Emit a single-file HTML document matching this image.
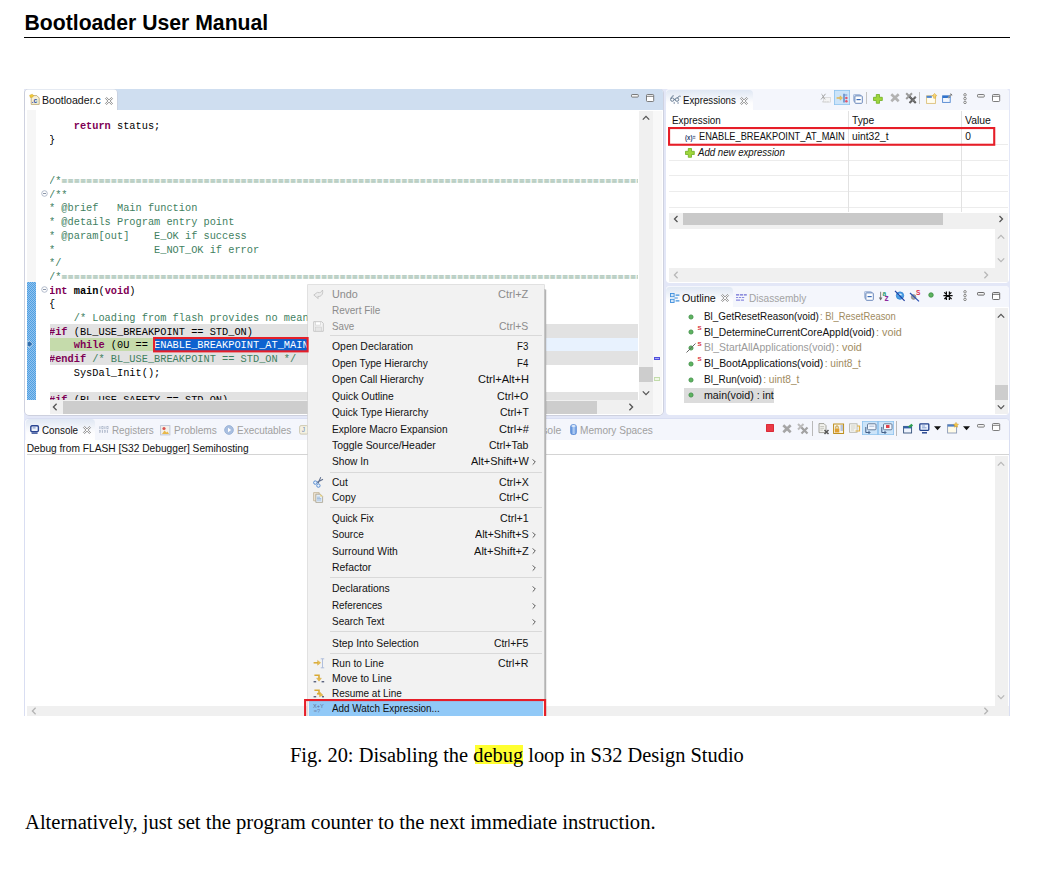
<!DOCTYPE html>
<html lang="en"><head><meta charset="utf-8"><title>Bootloader User Manual</title>
<style>
html,body{margin:0;padding:0;background:#fff}
body{width:1057px;height:876px;position:relative;overflow:hidden;font-family:"Liberation Sans", sans-serif}
.r{position:absolute}
.i{position:absolute;overflow:visible}
.t{position:absolute;white-space:pre;transform-origin:0 0}
.k{color:#7f0055;font-weight:bold}
.c{color:#3f7f5f}
.e{color:#86ad98;text-shadow:0 1px 0 #92b7a3;position:relative;top:0px;display:inline-block;transform:scaleY(0.8);transform-origin:0 6px}
.code{position:absolute;white-space:pre;font-family:"Liberation Mono", monospace;transform-origin:0 0;color:#000}
</style></head><body>
<span class="t" style='left:24.50px;top:9.17px;font-size:21.2px;line-height:27.56px;color:#000;font-weight:bold;'>Bootloader User Manual</span>
<div class="r" style="left:24px;top:36.8px;width:985.5px;height:1.3px;background:#000;"></div>
<div class="r" style="left:24px;top:89.3px;width:986px;height:626.7px;background:#e3e7f7;"></div>
<div class="r" style="left:25px;top:89.4px;width:638.4px;height:325.9px;background:#fff;border-radius:4px;box-shadow:0 0 0 0.7px #c6c9d6;clip-path:inset(0 -2px -2px -2px)"></div>
<div class="r" style="left:25px;top:89.4px;width:638.4px;height:20.3px;background:#cfdef0;border-radius:4px 4px 0 0"></div>
<div class="r" style="left:25px;top:89.4px;width:92.3px;height:21.1px;background:#fff;border-radius:4px 4px 0 0;box-shadow:0 0 0 0.6px #c8ccd8;clip-path:inset(0 -2px -2px -2px)"></div>
<div class="r" style="left:25.2px;top:109.8px;width:92.6px;height:1.4px;background:#fff;"></div>
<span class="t" style='left:41.70px;top:94.04px;font-size:10.2px;line-height:13.26px;color:#111;transform:scaleX(1.0381);'>Bootloader.c</span>
<div class="r" style="left:27.3px;top:110px;width:8.4px;height:290px;background:#f6f6f6;"></div>
<div class="r" style="left:27px;top:282px;width:8.9px;height:118px;background:#6cade6;background-image:repeating-conic-gradient(#4f9fe2 0 25%,#92c3ee 0 50%);background-size:2px 2px"></div>
<div class="r" style="left:49.5px;top:323.95px;width:588.8px;height:13.71px;background:#e2e2e2;"></div>
<div class="r" style="left:49.5px;top:351.37px;width:588.8px;height:13.71px;background:#e2e2e2;"></div>
<div class="r" style="left:49.5px;top:392.00000000000006px;width:588.8px;height:7.999999999999943px;background:#e2e2e2;"></div>
<div class="r" style="left:49.5px;top:337.66px;width:588.8px;height:13.71px;background:#e8f2fe;"></div>
<div class="r" style="left:49.5px;top:337.66px;width:104px;height:13.71px;background:#c5dbab;"></div>
<div class="r" style="left:153.5px;top:338.26000000000005px;width:154px;height:12.510000000000002px;background:#0d62cf;"></div>
<div class="r" style="left:49.5px;top:110px;width:588.8px;height:290px;overflow:hidden"><div class="code" style="left:-0.8px;top:10.20px;font-size:11.0px;line-height:13.71px;transform:scaleX(0.9362)">    <span class="k">return</span> status;
}


<span class="c">/*</span><span class="e">==============================================================================================================</span>
<span class="c">/**</span>
<span class="c">* @brief   Main function</span>
<span class="c">* @details Program entry point</span>
<span class="c">* @param[out]    E_OK if success</span>
<span class="c">*                E_NOT_OK if error</span>
<span class="c">*/</span>
<span class="c">/*</span><span class="e">==============================================================================================================</span>
<span class="k">int</span> <b>main</b>(<span class="k">void</span>)
{
    <span class="c">/* Loading from flash provides no meaningful</span>
<span class="k">#if</span> (BL_USE_BREAKPOINT == STD_ON)
    <span class="k">while</span> (0U == <span style="color:#fff">ENABLE_BREAKPOINT_AT_MAIN)</span>
<span class="k">#endif</span> <span class="c">/* BL_USE_BREAKPOINT == STD_ON */</span>
    SysDal_Init();

<span class="k">#if</span> (BL_USE_SAFETY == STD_ON)</div></div>
<svg class="i" style="left:40.7px;top:189.7px" width="7" height="7" viewBox="0 0 7 7"><circle cx="3.5" cy="3.5" r="2.8" fill="#fff" stroke="#aab4c6" stroke-width="0.9"/><path d="M2 3.5h3" stroke="#8a95a8" stroke-width="1"/></svg>
<svg class="i" style="left:40.7px;top:285.5px" width="7" height="7" viewBox="0 0 7 7"><circle cx="3.5" cy="3.5" r="2.8" fill="#fff" stroke="#aab4c6" stroke-width="0.9"/><path d="M2 3.5h3" stroke="#8a95a8" stroke-width="1"/></svg>
<svg class="i" style="left:27px;top:340px" width="6.5" height="8" viewBox="0 0 6.5 8"><path d="M0.2 1.6h1.8V0.4L5.8 4 2 7.6V6.4H0.2z" fill="#2f6eae" stroke="#d4e6f6" stroke-width="0.7" stroke-linejoin="round"/></svg>
<div class="r" style="left:639px;top:111px;width:14px;height:289.4px;background:#f0f0f0;"></div>
<div class="r" style="left:639px;top:367px;width:14px;height:15px;background:#cdcdcd;"></div>
<div class="r" style="left:653px;top:111px;width:9px;height:302.7px;background:#f8f8f8;"></div>
<div class="r" style="left:654.2px;top:356.6px;width:6px;height:3.2px;background:#a9a9f6;box-shadow:inset 0 0 0 0.9px #4f4fdc"></div>
<div class="r" style="left:654.2px;top:377.4px;width:6px;height:3.2px;background:#f1f8e6;box-shadow:inset 0 0 0 0.9px #c2dcaa"></div>
<svg class="i" style="left:640.6px;top:113.3px" width="10" height="10" viewBox="-5 -5 10 10"><path d="M-3.2 1.6L0 -1.6L3.2 1.6" fill="none" stroke="#555" stroke-width="1.3"/></svg>
<svg class="i" style="left:640.6px;top:387.5px" width="10" height="10" viewBox="-5 -5 10 10"><path d="M-3.2 -1.6L0 1.6L3.2 -1.6" fill="none" stroke="#555" stroke-width="1.3"/></svg>
<div class="r" style="left:49.5px;top:400.4px;width:603.5px;height:13.3px;background:#f0f0f0;"></div>
<div class="r" style="left:62.5px;top:400.8px;width:534.5px;height:12.8px;background:#cdcdcd;"></div>
<svg class="i" style="left:49.5px;top:401.5px" width="10" height="10" viewBox="-5 -5 10 10"><path d="M1.6 -3.2L-1.6 0L1.6 3.2" fill="none" stroke="#555" stroke-width="1.3"/></svg>
<svg class="i" style="left:626px;top:401.5px" width="10" height="10" viewBox="-5 -5 10 10"><path d="M-1.6 -3.2L1.6 0L-1.6 3.2" fill="none" stroke="#555" stroke-width="1.3"/></svg>
<svg class="i" style="left:630.6px;top:94.0px" width="8" height="4" viewBox="0 0 8 4"><rect x="0.5" y="0.5" width="6.8" height="2.6" rx="0.7" fill="#f4f4f4" stroke="#6e6e6e" stroke-width="0.9"/></svg>
<svg class="i" style="left:646.0px;top:93.9px" width="9" height="9" viewBox="0 0 9 9"><rect x="0.5" y="0.5" width="7.2" height="7" rx="0.9" fill="#fff" stroke="#6e6e6e" stroke-width="0.9"/><path d="M0.5 2.3h7.2" stroke="#6e6e6e" stroke-width="0.9"/></svg>
<svg class="i" style="left:105px;top:96.5px" width="8" height="8" viewBox="0 0 8 8"><path d="M1.6 0.5L4 2.9L6.4 0.5L7.5 1.6L5.1 4L7.5 6.4L6.4 7.5L4 5.1L1.6 7.5L0.5 6.4L2.9 4L0.5 1.6Z" fill="#fbfbfb" stroke="#7e7e7e" stroke-width="0.85" stroke-linejoin="round"/></svg>
<svg class="i" style="left:28.6px;top:94.2px" width="11" height="11" viewBox="0 0 11 11"><path d="M2.2 1.6h5.6l2.4 2.4v6.4h-8z" fill="#f7f0d8" stroke="#b7a26a" stroke-width="0.8"/><path d="M0.6 1.2l2.6-1 1.6 1.4-1.2 1.6-2.4 0.2z" fill="#f0c93a" stroke="#c99a1a" stroke-width="0.4"/><text x="2.6" y="9.4" font-size="6.8" font-weight="bold" fill="#2f55a8" font-family="Liberation Sans,sans-serif">.c</text></svg>
<div class="r" style="left:666.2px;top:89.3px;width:342.6px;height:194.2px;background:#fff;border-radius:4px"></div>
<div class="r" style="left:666.2px;top:89.3px;width:342.6px;height:20.5px;background:#f4f6fc;border-radius:4px 4px 0 0"></div>
<div class="r" style="left:666.4px;top:89.6px;width:86.8px;height:20.4px;background:linear-gradient(#dfe7f3,#fdfdfe 65%,#fff);border-radius:4px 4px 0 0"></div>
<span class="t" style='left:682.70px;top:93.54px;font-size:10.2px;line-height:13.26px;color:#111;transform:scaleX(0.9514);'>Expressions</span>
<svg class="i" style="left:740px;top:96.5px" width="8" height="8" viewBox="0 0 8 8"><path d="M1.6 0.5L4 2.9L6.4 0.5L7.5 1.6L5.1 4L7.5 6.4L6.4 7.5L4 5.1L1.6 7.5L0.5 6.4L2.9 4L0.5 1.6Z" fill="#fbfbfb" stroke="#7e7e7e" stroke-width="0.85" stroke-linejoin="round"/></svg>
<svg class="i" style="left:670px;top:95px" width="11.5" height="9.5" viewBox="0 0 11.5 9.5"><circle cx="2.3" cy="4.6" r="1.7" fill="none" stroke="#5a7088" stroke-width="0.9"/><circle cx="7" cy="4.6" r="1.7" fill="none" stroke="#5a7088" stroke-width="0.9"/><path d="M0.8 3.8C1.4 1.6 2.6 0.6 3.8 0.8M4 4.4h1.3M7.6 3C8.2 1.4 9.6 0.6 10.8 1.4" fill="none" stroke="#5a7088" stroke-width="0.9"/><path d="M3.6 7.4h1.3v1.2h-1.3zM7.4 7.4h1.3v1.2h-1.3z" fill="#4a6284"/></svg>
<span class="t" style='left:672.20px;top:113.64px;font-size:10.2px;line-height:13.26px;color:#111;transform:scaleX(0.9681);'>Expression</span>
<span class="t" style='left:851.70px;top:113.64px;font-size:10.2px;line-height:13.26px;color:#111;transform:scaleX(1.0093);'>Type</span>
<span class="t" style='left:965.20px;top:113.54px;font-size:10.2px;line-height:13.26px;color:#111;transform:scaleX(1.0232);'>Value</span>
<span class="t" style='left:698.70px;top:130.24px;font-size:10.2px;line-height:13.26px;color:#111;transform:scaleX(0.9078);'>ENABLE_BREAKPOINT_AT_MAIN</span>
<span class="t" style='left:852.00px;top:130.34px;font-size:10.2px;line-height:13.26px;color:#111;transform:scaleX(1.0092);'>uint32_t</span>
<span class="t" style='left:965.20px;top:130.34px;font-size:10.2px;line-height:13.26px;color:#111;'>0</span>
<span class="t" style='left:698.20px;top:145.74px;font-size:10.2px;line-height:13.26px;color:#111;font-style:italic;transform:scaleX(0.9460);'>Add new expression</span>
<svg class="i" style="left:684.8px;top:132.6px" width="11" height="8" viewBox="0 0 11 8"><text x="0" y="6.6" font-size="7.4" font-weight="bold" fill="#2c3c6c" font-family="Liberation Sans,sans-serif" textLength="7.4" lengthAdjust="spacingAndGlyphs">(x)</text><path d="M7.8 3.4h2.6M7.8 5.2h2.6" stroke="#44547c" stroke-width="0.8"/></svg>
<svg class="i" style="left:684.6px;top:147.8px" width="10" height="10" viewBox="0 0 10 10"><path d="M3.3 0.5h3.2v2.8h2.8v3.2h-2.8v2.8h-3.2v-2.8h-2.8v-3.2h2.8z" fill="#9fd63c" stroke="#6fae22" stroke-width="0.8" stroke-linejoin="round"/></svg>
<div class="r" style="left:669px;top:144.2px;width:339px;height:1px;background:#ececec;"></div>
<div class="r" style="left:669px;top:159.5px;width:339px;height:1px;background:#ececec;"></div>
<div class="r" style="left:669px;top:175.3px;width:339px;height:1px;background:#ececec;"></div>
<div class="r" style="left:669px;top:191.2px;width:339px;height:1px;background:#ececec;"></div>
<div class="r" style="left:669px;top:207px;width:339px;height:1px;background:#ececec;"></div>
<div class="r" style="left:847.5px;top:110.5px;width:1px;height:101px;background:#e2e2e2;"></div>
<div class="r" style="left:961px;top:110.5px;width:1px;height:101px;background:#e2e2e2;"></div>
<div class="r" style="left:669px;top:212.5px;width:339px;height:16.5px;background:#f0f0f0;"></div>
<div class="r" style="left:683px;top:212.5px;width:260px;height:12.5px;background:#c9c9c9;"></div>
<svg class="i" style="left:670.5px;top:214px" width="10" height="10" viewBox="-5 -5 10 10"><path d="M1.5 -3L-1.5 0L1.5 3" fill="none" stroke="#555" stroke-width="1.3"/></svg>
<svg class="i" style="left:995.5px;top:214px" width="10" height="10" viewBox="-5 -5 10 10"><path d="M-1.5 -3L1.5 0L-1.5 3" fill="none" stroke="#555" stroke-width="1.3"/></svg>
<div class="r" style="left:994.5px;top:229px;width:13.5px;height:39px;background:#f0f0f0;"></div>
<svg class="i" style="left:996px;top:232px" width="10" height="10" viewBox="-5 -5 10 10"><path d="M-3.2 1.6L0 -1.6L3.2 1.6" fill="none" stroke="#b8b8b8" stroke-width="1.3"/></svg>
<svg class="i" style="left:996px;top:255px" width="10" height="10" viewBox="-5 -5 10 10"><path d="M-3.2 -1.6L0 1.6L3.2 -1.6" fill="none" stroke="#b8b8b8" stroke-width="1.3"/></svg>
<div class="r" style="left:669px;top:268px;width:339px;height:14.2px;background:#f0f0f0;"></div>
<svg class="i" style="left:670.5px;top:269.5px" width="10" height="10" viewBox="-5 -5 10 10"><path d="M1.6 -3.2L-1.6 0L1.6 3.2" fill="none" stroke="#b8b8b8" stroke-width="1.3"/></svg>
<svg class="i" style="left:981px;top:269.5px" width="10" height="10" viewBox="-5 -5 10 10"><path d="M-1.6 -3.2L1.6 0L-1.6 3.2" fill="none" stroke="#b8b8b8" stroke-width="1.3"/></svg>
<div class="r" style="left:833.9px;top:90.2px;width:15.9px;height:14.6px;background:#cce4f9;box-shadow:inset 0 0 0 0.8px #8fc3ee"></div>
<svg class="i" style="left:820px;top:93px" width="11" height="10" viewBox="0 0 11 10"><rect x="3.5" y="4.5" width="7" height="4.6" fill="#f4f4f4" stroke="#d2d2d2" stroke-width="0.7"/><path d="M1 6.5L5.5 0.8M1.5 1.2c1.5 0 2 5 3.8 5" stroke="#a6a6a6" stroke-width="1" fill="none"/><path d="M2 8.8h7" stroke="#c4c4c4" stroke-width="0.7" stroke-dasharray="1 0.6"/></svg>
<svg class="i" style="left:835.5px;top:93px" width="13" height="11" viewBox="0 0 13 11"><path d="M0.6 5h4.2" stroke="#e3b64e" stroke-width="1.5"/><path d="M4 2.8l2.6 2.2L4 7.2z" fill="#e9c568" stroke="#d7a636" stroke-width="0.4"/><path d="M8 0.8v8.8" stroke="#3566b4" stroke-width="1.1"/><path d="M8.5 2h2.8" stroke="#5b86c8" stroke-width="0.9"/><circle cx="10.4" cy="4.9" r="1.25" fill="#e2566a"/><circle cx="10.4" cy="8.3" r="1.25" fill="#e2566a"/></svg>
<svg class="i" style="left:852.6px;top:93.6px" width="10" height="10" viewBox="0 0 10 10"><rect x="0.5" y="0.5" width="7" height="7" rx="0.8" fill="#c9d8ee" stroke="#9fb4d6" stroke-width="0.8"/><rect x="1.9" y="1.9" width="7.4" height="7.4" rx="0.8" fill="#fff" stroke="#5a7ab2" stroke-width="0.9"/><path d="M3.5 5.6h4.2" stroke="#3a6ab8" stroke-width="1.2"/></svg>
<div class="r" style="left:866.3px;top:92px;width:1.2px;height:11.8px;background:#c2c2c2;"></div>
<svg class="i" style="left:872.8px;top:93.6px" width="10" height="10" viewBox="0 0 10 10"><path d="M3.3 0.5h3.2v2.8h2.8v3.2h-2.8v2.8h-3.2v-2.8h-2.8v-3.2h2.8z" fill="#9fd63c" stroke="#6fae22" stroke-width="0.8" stroke-linejoin="round"/></svg>
<svg class="i" style="left:889.5px;top:93.3px" width="10" height="9.5" viewBox="0 0 10 9.5"><path d="M1.3 1.2L8.7 8.3M8.7 1.2L1.3 8.3" stroke="#b2b2b2" stroke-width="2.6"/></svg>
<svg class="i" style="left:904.5px;top:92px" width="12" height="12" viewBox="0 0 12 12"><path d="M1.2 1.2L7 7M7 1.2L1.2 7" stroke="#9a9a9a" stroke-width="2"/><path d="M4.5 4.8L10.8 11M10.8 4.8L4.5 11" stroke="#5a5a5a" stroke-width="2.1"/><path d="M5 5.2L10.4 10.6M10.4 5.2L5 10.6" stroke="#c8c8c8" stroke-width="0.5" stroke-dasharray="1 1"/></svg>
<div class="r" style="left:919.2px;top:92px;width:1.2px;height:11.8px;background:#c2c2c2;"></div>
<svg class="i" style="left:925.5px;top:92.5px" width="12" height="11" viewBox="0 0 12 11"><rect x="0.6" y="2.8" width="8.8" height="7.6" fill="#fffdf0" stroke="#dcc078" stroke-width="0.9"/><rect x="0.6" y="2.8" width="5.2" height="2.1" fill="#4f86d0"/><path d="M8.6 0.4l2.3 2.4h-1.3v2.4h-2v-2.4h-1.3z" fill="#f6d778" stroke="#d2a030" stroke-width="0.5"/></svg>
<svg class="i" style="left:942px;top:93px" width="11" height="10" viewBox="0 0 11 10"><rect x="0.6" y="2.8" width="7.6" height="6.6" fill="#f2f7fe" stroke="#4f86d0" stroke-width="0.9"/><rect x="0.6" y="2.8" width="7.6" height="2.2" fill="#2f72cc"/><path d="M5.4 4.4l3.4-3.6 1.3 1.2-3.4 3.6z" fill="#9a9a9a"/><path d="M8.6 0.6l1.6 1.5" stroke="#6a6a6a" stroke-width="0.9"/></svg>
<svg class="i" style="left:962.8px;top:92.6px" width="4" height="12" viewBox="0 0 4 12"><circle cx="2" cy="1.8" r="1.25" fill="#fff" stroke="#666" stroke-width="0.75"/><circle cx="2" cy="5.6" r="1.25" fill="#fff" stroke="#666" stroke-width="0.75"/><circle cx="2" cy="9.4" r="1.25" fill="#fff" stroke="#666" stroke-width="0.75"/></svg>
<svg class="i" style="left:976.6px;top:94.1px" width="8" height="4" viewBox="0 0 8 4"><rect x="0.5" y="0.5" width="6.8" height="2.6" rx="0.7" fill="#f4f4f4" stroke="#6e6e6e" stroke-width="0.9"/></svg>
<svg class="i" style="left:992.0px;top:94.0px" width="9" height="9" viewBox="0 0 9 9"><rect x="0.5" y="0.5" width="7.2" height="7" rx="0.9" fill="#fff" stroke="#6e6e6e" stroke-width="0.9"/><path d="M0.5 2.3h7.2" stroke="#6e6e6e" stroke-width="0.9"/></svg>
<div class="r" style="left:666.2px;top:286.2px;width:342.6px;height:129.3px;background:#fff;border-radius:4px"></div>
<div class="r" style="left:666.2px;top:286.2px;width:342.6px;height:21.3px;background:#f4f6fc;border-radius:4px 4px 0 0"></div>
<div class="r" style="left:666.4px;top:286.6px;width:67px;height:21.4px;background:linear-gradient(#dfe7f3,#fdfdfe 65%,#fff);border-radius:4px 4px 0 0"></div>
<span class="t" style='left:682.20px;top:291.84px;font-size:10.2px;line-height:13.26px;color:#111;transform:scaleX(1.0470);'>Outline</span>
<svg class="i" style="left:720.5px;top:293.5px" width="8" height="8" viewBox="0 0 8 8"><path d="M1.6 0.5L4 2.9L6.4 0.5L7.5 1.6L5.1 4L7.5 6.4L6.4 7.5L4 5.1L1.6 7.5L0.5 6.4L2.9 4L0.5 1.6Z" fill="#fbfbfb" stroke="#7e7e7e" stroke-width="0.85" stroke-linejoin="round"/></svg>
<svg class="i" style="left:670px;top:292.8px" width="10" height="10.5" viewBox="0 0 10 10.5"><rect x="0.5" y="0.5" width="3.6" height="3.2" fill="#d3e6f9" stroke="#3f8fdc" stroke-width="0.9"/><rect x="0.5" y="6.3" width="3.6" height="3.2" fill="#d3e6f9" stroke="#3f8fdc" stroke-width="0.9"/><path d="M5.6 2.1h3.8M4.4 5h3.4M5.6 7.9h3.8" stroke="#3f8fdc" stroke-width="1.1"/></svg>
<svg class="i" style="left:736.3px;top:294px" width="11" height="7.5" viewBox="0 0 11 7.5"><path d="M0 0.9h10.8" stroke="#6e6ed2" stroke-width="1.1" stroke-dasharray="3.2 0.8"/><path d="M0 3.5h9" stroke="#8a8ae0" stroke-width="1.1" stroke-dasharray="2.2 0.8"/><path d="M0 6.1h8" stroke="#8a8ae0" stroke-width="1.1" stroke-dasharray="4 0.8"/></svg>
<span class="t" style='left:749.20px;top:291.84px;font-size:10.2px;line-height:13.26px;color:#a3a3a3;transform:scaleX(0.9922);'>Disassembly</span>
<div class="r" style="left:684px;top:387.5px;width:90px;height:15.5px;background:#dcdcdc;"></div>
<svg class="i" style="left:687px;top:312.5px" width="8" height="8" viewBox="0 0 8 8"><circle cx="4" cy="4" r="2.1" fill="#5db45f" stroke="#3a8a42" stroke-width="0.8"/></svg>
<span class="t" style='left:703.70px;top:309.94px;font-size:10.2px;line-height:13.26px;color:#111;transform:scaleX(0.9699);'>Bl_GetResetReason(void)</span>
<span class="t" style='left:820.20px;top:309.94px;font-size:10.2px;line-height:13.26px;color:#a08b5f;transform:scaleX(0.9230);'>: Bl_ResetReason</span>
<svg class="i" style="left:687px;top:328.2px" width="8" height="8" viewBox="0 0 8 8"><circle cx="4" cy="4" r="2.1" fill="#5db45f" stroke="#3a8a42" stroke-width="0.8"/></svg>
<span class="t" style='left:697.60px;top:323.82px;font-size:6.2px;line-height:8.06px;color:#d8303c;font-weight:bold;'>S</span>
<span class="t" style='left:703.70px;top:325.64px;font-size:10.2px;line-height:13.26px;color:#111;transform:scaleX(1.0054);'>Bl_DetermineCurrentCoreAppId(void)</span>
<span class="t" style='left:876.20px;top:325.64px;font-size:10.2px;line-height:13.26px;color:#a08b5f;transform:scaleX(1.0591);'>: void</span>
<svg class="i" style="left:687px;top:344px" width="8" height="8" viewBox="0 0 8 8"><circle cx="4" cy="4" r="2.1" fill="#5db45f" stroke="#3a8a42" stroke-width="0.8"/></svg>
<span class="t" style='left:697.60px;top:339.62px;font-size:6.2px;line-height:8.06px;color:#d8303c;font-weight:bold;'>S</span>
<span class="t" style='left:703.70px;top:341.44px;font-size:10.2px;line-height:13.26px;color:#9a9a9a;transform:scaleX(1.0221);'>Bl_StartAllApplications(void)</span>
<span class="t" style='left:836.20px;top:341.44px;font-size:10.2px;line-height:13.26px;color:#a08b5f;transform:scaleX(1.0591);'>: void</span>
<svg class="i" style="left:686px;top:343px" width="10" height="10" viewBox="0 0 10 10"><path d="M0.5 9.5L9.5 0.5" stroke="#666" stroke-width="1"/></svg>
<svg class="i" style="left:687px;top:359.8px" width="8" height="8" viewBox="0 0 8 8"><circle cx="4" cy="4" r="2.1" fill="#5db45f" stroke="#3a8a42" stroke-width="0.8"/></svg>
<span class="t" style='left:697.60px;top:355.42px;font-size:6.2px;line-height:8.06px;color:#d8303c;font-weight:bold;'>S</span>
<span class="t" style='left:703.70px;top:357.24px;font-size:10.2px;line-height:13.26px;color:#111;transform:scaleX(1.0276);'>Bl_BootApplications(void)</span>
<span class="t" style='left:824.70px;top:357.24px;font-size:10.2px;line-height:13.26px;color:#a08b5f;'>: uint8_t</span>
<svg class="i" style="left:687px;top:375.6px" width="8" height="8" viewBox="0 0 8 8"><circle cx="4" cy="4" r="2.1" fill="#5db45f" stroke="#3a8a42" stroke-width="0.8"/></svg>
<span class="t" style='left:703.70px;top:373.04px;font-size:10.2px;line-height:13.26px;color:#111;transform:scaleX(0.9815);'>Bl_Run(void)</span>
<span class="t" style='left:763.20px;top:373.04px;font-size:10.2px;line-height:13.26px;color:#a08b5f;'>: uint8_t</span>
<svg class="i" style="left:687px;top:391.3px" width="8" height="8" viewBox="0 0 8 8"><circle cx="4" cy="4" r="2.1" fill="#5db45f" stroke="#3a8a42" stroke-width="0.8"/></svg>
<span class="t" style='left:703.70px;top:388.74px;font-size:10.2px;line-height:13.26px;color:#111;transform:scaleX(1.0447);'>main(void) : int</span>
<div class="r" style="left:994.5px;top:308px;width:13.5px;height:105.5px;background:#f0f0f0;"></div>
<div class="r" style="left:994.5px;top:385px;width:13.5px;height:14.5px;background:#cdcdcd;"></div>
<svg class="i" style="left:996px;top:310.5px" width="10" height="10" viewBox="-5 -5 10 10"><path d="M-3.2 1.6L0 -1.6L3.2 1.6" fill="none" stroke="#555" stroke-width="1.3"/></svg>
<svg class="i" style="left:996px;top:402px" width="10" height="10" viewBox="-5 -5 10 10"><path d="M-3.2 -1.6L0 1.6L3.2 -1.6" fill="none" stroke="#555" stroke-width="1.3"/></svg>
<svg class="i" style="left:863.6px;top:290.6px" width="10" height="10" viewBox="0 0 10 10"><rect x="0.5" y="0.5" width="7" height="7" rx="0.8" fill="#c9d8ee" stroke="#9fb4d6" stroke-width="0.8"/><rect x="1.9" y="1.9" width="7.4" height="7.4" rx="0.8" fill="#fff" stroke="#5a7ab2" stroke-width="0.9"/><path d="M3.5 5.6h4.2" stroke="#3a6ab8" stroke-width="1.2"/></svg>
<svg class="i" style="left:877.5px;top:289.5px" width="13" height="12" viewBox="0 0 13 12"><path d="M2.6 1.8v7.6" stroke="#8a8a8a" stroke-width="1.1"/><path d="M0.8 7.6h3.6L2.6 10.4z" fill="#6a6a6a"/><text x="4.6" y="5.6" font-size="6.6" font-weight="bold" fill="#2a9a72" font-family="Liberation Sans,sans-serif">a</text><text x="6.4" y="11.4" font-size="8.4" font-weight="bold" fill="#8e2a9e" font-family="Liberation Sans,sans-serif">z</text></svg>
<svg class="i" style="left:893.5px;top:289.8px" width="12" height="12" viewBox="0 0 12 12"><circle cx="6" cy="5.6" r="3.7" fill="#4aa0e6" stroke="#2f7fd0" stroke-width="0.8"/><path d="M3.8 5.2a2.3 2.3 0 0 1 4.4 0z" fill="#d8ecfb"/><path d="M1 0.8L10.6 10.8" stroke="#1f3fa0" stroke-width="1.2"/></svg>
<svg class="i" style="left:909px;top:289.5px" width="12" height="12" viewBox="0 0 12 12"><circle cx="4.6" cy="7" r="2.4" fill="#a0a0a0" stroke="#808080" stroke-width="0.6"/><path d="M1 3L10 11.4" stroke="#2a4fb0" stroke-width="1.2"/><text x="7" y="5.4" font-size="6.6" font-weight="bold" fill="#e0304a" font-family="Liberation Sans,sans-serif">S</text></svg>
<svg class="i" style="left:926.8px;top:291.4px" width="8" height="8" viewBox="0 0 8 8"><circle cx="4" cy="4" r="2.25" fill="#5db45f" stroke="#3a8a42" stroke-width="0.8"/></svg>
<svg class="i" style="left:942.5px;top:291px" width="10" height="10" viewBox="0 0 10 10"><path d="M3.4 0.4v8.6M6.4 0.4v8.6M0.4 4.6h9.2M1.2 1.4l7.4 6.6M8.4 1.4L1.4 8" stroke="#0a0a0a" stroke-width="1.25"/></svg>
<svg class="i" style="left:963px;top:289.6px" width="4" height="12" viewBox="0 0 4 12"><circle cx="2" cy="1.8" r="1.25" fill="#fff" stroke="#666" stroke-width="0.75"/><circle cx="2" cy="5.6" r="1.25" fill="#fff" stroke="#666" stroke-width="0.75"/><circle cx="2" cy="9.4" r="1.25" fill="#fff" stroke="#666" stroke-width="0.75"/></svg>
<svg class="i" style="left:976.6px;top:292.0px" width="8" height="4" viewBox="0 0 8 4"><rect x="0.5" y="0.5" width="6.8" height="2.6" rx="0.7" fill="#f4f4f4" stroke="#5a5a5a" stroke-width="0.9"/></svg>
<svg class="i" style="left:992.0px;top:291.9px" width="9" height="9" viewBox="0 0 9 9"><rect x="0.5" y="0.5" width="7.2" height="7" rx="0.9" fill="#fff" stroke="#5a5a5a" stroke-width="0.9"/><path d="M0.5 2.3h7.2" stroke="#5a5a5a" stroke-width="0.9"/></svg>
<div class="r" style="left:25px;top:418.5px;width:984px;height:297.5px;background:#fff;border-radius:4px 4px 0 0;box-shadow:0 0 0 1px #d9def2"></div>
<div class="r" style="left:25px;top:418.5px;width:984px;height:21px;background:#f4f6fc;border-radius:4px 4px 0 0"></div>
<div class="r" style="left:25.6px;top:419.2px;width:69.6px;height:20.8px;background:linear-gradient(#dfe7f3,#fdfdfe 65%,#fff);border-radius:4px 4px 0 0"></div>
<span class="t" style='left:42.20px;top:423.64px;font-size:10.2px;line-height:13.26px;color:#111;transform:scaleX(0.9655);'>Console</span>
<svg class="i" style="left:83px;top:426px" width="8" height="8" viewBox="0 0 8 8"><path d="M1.6 0.5L4 2.9L6.4 0.5L7.5 1.6L5.1 4L7.5 6.4L6.4 7.5L4 5.1L1.6 7.5L0.5 6.4L2.9 4L0.5 1.6Z" fill="#fbfbfb" stroke="#7e7e7e" stroke-width="0.85" stroke-linejoin="round"/></svg>
<svg class="i" style="left:29.8px;top:425.3px" width="9.5" height="9.5" viewBox="0 0 9.5 9.5"><rect x="0.8" y="0.8" width="7.6" height="5.8" rx="1.1" fill="#eef3fb" stroke="#2a4592" stroke-width="1.4"/><path d="M2.6 2.9h3" stroke="#5a78b8" stroke-width="0.8"/><path d="M1.6 7.4h6v1.4h-6z" fill="#2a4592"/></svg>
<svg class="i" style="left:99.4px;top:426px" width="10.5" height="7.6" viewBox="0 0 10.5 7.6"><path d="M0.9 0.3v2.8" stroke="#9aa6bc" stroke-width="0.8"/><rect x="2.8" y="0.5" width="1.3" height="2.4" fill="none" stroke="#a8b3c6" stroke-width="0.6"/><path d="M5.9 0.3v2.8" stroke="#9aa6bc" stroke-width="0.8"/><rect x="7.8" y="0.5" width="1.3" height="2.4" fill="none" stroke="#a8b3c6" stroke-width="0.6"/><rect x="0.3" y="4.3" width="1.3" height="2.4" fill="none" stroke="#a8b3c6" stroke-width="0.6"/><path d="M3.4 4.1v2.8" stroke="#9aa6bc" stroke-width="0.8"/><rect x="5.3" y="4.3" width="1.3" height="2.4" fill="none" stroke="#a8b3c6" stroke-width="0.6"/><path d="M8.4 4.1v2.8" stroke="#9aa6bc" stroke-width="0.8"/></svg>
<span class="t" style='left:112.20px;top:423.64px;font-size:10.2px;line-height:13.26px;color:#a0a0a0;transform:scaleX(0.9667);'>Registers</span>
<svg class="i" style="left:160px;top:424.5px" width="11" height="11" viewBox="0 0 11 11"><rect x="0.6" y="0.6" width="9.3" height="9.3" fill="#f4f0ea" stroke="#b9c3d5" stroke-width="0.9"/><circle cx="4" cy="3.5" r="1.6" fill="#d9534f"/><path d="M2 9l2.5-3.5 2 2 1-1 1.5 2.5z" fill="#e8b84a"/></svg>
<span class="t" style='left:174.20px;top:423.64px;font-size:10.2px;line-height:13.26px;color:#a0a0a0;transform:scaleX(0.9946);'>Problems</span>
<svg class="i" style="left:224px;top:425px" width="10" height="10" viewBox="0 0 10 10"><circle cx="5" cy="5" r="4.4" fill="#a9bfe0" stroke="#8da8d0" stroke-width="0.7"/><path d="M4 2.8v4.4l3.2-2.2z" fill="#fff"/></svg>
<span class="t" style='left:237.40px;top:423.64px;font-size:10.2px;line-height:13.26px;color:#a0a0a0;transform:scaleX(0.9784);'>Executables</span>
<svg class="i" style="left:299.3px;top:425px" width="10" height="10" viewBox="0 0 10 10"><rect x="0.6" y="0.6" width="8.5" height="8.5" rx="1.5" fill="#f4f1e2" stroke="#c4bfa2" stroke-width="0.8"/><text x="2.8" y="7.4" font-size="6.5" fill="#6a87b8" font-family="Liberation Sans,sans-serif">J</text></svg>
<span class="t" style='left:522.80px;top:423.64px;font-size:10.2px;line-height:13.26px;color:#a0a0a0;transform:scaleX(1.0243);'>Console</span>
<svg class="i" style="left:570.3px;top:424.3px" width="7.5" height="11.5" viewBox="0 0 7.5 11.5"><defs><linearGradient id="mg" x1="0" x2="1"><stop offset="0" stop-color="#4f86d8"/><stop offset="0.55" stop-color="#b5d0f4"/><stop offset="1" stop-color="#6a9ae0"/></linearGradient></defs><rect x="0.7" y="0.7" width="5.6" height="9.8" rx="1.8" fill="url(#mg)" stroke="#4a7fd0" stroke-width="0.8"/><ellipse cx="3.5" cy="2" rx="2.2" ry="0.9" fill="#dbe9fb"/></svg>
<span class="t" style='left:580.40px;top:423.64px;font-size:10.2px;line-height:13.26px;color:#a0a0a0;transform:scaleX(0.9890);'>Memory Spaces</span>
<span class="t" style='left:26.70px;top:442.24px;font-size:10.2px;line-height:13.26px;color:#111;'>Debug from FLASH [S32 Debugger] Semihosting</span>
<div class="r" style="left:27px;top:454px;width:981.5px;height:1.2px;background:#d4d4d4;"></div>
<div class="r" style="left:994.5px;top:455.5px;width:13.5px;height:250px;background:#f0f0f0;"></div>
<svg class="i" style="left:996px;top:458.5px" width="10" height="10" viewBox="-5 -5 10 10"><path d="M-3.2 1.6L0 -1.6L3.2 1.6" fill="none" stroke="#b8b8b8" stroke-width="1.3"/></svg>
<svg class="i" style="left:996px;top:692px" width="10" height="10" viewBox="-5 -5 10 10"><path d="M-3.2 -1.6L0 1.6L3.2 -1.6" fill="none" stroke="#b8b8b8" stroke-width="1.3"/></svg>
<div class="r" style="left:27px;top:705.5px;width:981.5px;height:10.5px;background:#f0f0f0;"></div>
<svg class="i" style="left:28.5px;top:706px" width="10" height="10" viewBox="-5 -5 10 10"><path d="M1.6 -3.2L-1.6 0L1.6 3.2" fill="none" stroke="#b4b4b4" stroke-width="1.3"/></svg>
<svg class="i" style="left:981.2px;top:706px" width="10" height="10" viewBox="-5 -5 10 10"><path d="M-1.6 -3.2L1.6 0L-1.6 3.2" fill="none" stroke="#b4b4b4" stroke-width="1.3"/></svg>
<div class="r" style="left:766.2px;top:424.3px;width:7.8px;height:7.8px;background:#ea3a46;border-radius:1.2px;box-shadow:inset 0 0 0 0.8px #d62834"></div>
<svg class="i" style="left:781.5px;top:423.5px" width="10" height="9.5" viewBox="0 0 10 9.5"><path d="M1.3 1.2L8.7 8.3M8.7 1.2L1.3 8.3" stroke="#a6a6a6" stroke-width="2.6"/></svg>
<svg class="i" style="left:796.5px;top:422.5px" width="12" height="12" viewBox="0 0 12 12"><path d="M1 1L6.5 6.5M6.5 1L1 6.5" stroke="#bcbcbc" stroke-width="2"/><path d="M4.5 4.5L10.5 10.5M10.5 4.5L4.5 10.5" stroke="#a2a2a2" stroke-width="2.2"/></svg>
<div class="r" style="left:811.5px;top:421px;width:1px;height:15px;background:#b9b9b9;"></div>
<svg class="i" style="left:817.5px;top:422.5px" width="12" height="12" viewBox="0 0 12 12"><path d="M1 0.6h5l2 2v7h-7z" fill="#f2f2ee" stroke="#8f8f86" stroke-width="0.8"/><path d="M2.3 3.5h3.8M2.3 5.3h3.8M2.3 7.1h2.5" stroke="#b5b5aa" stroke-width="0.7"/><path d="M6.5 7L10.5 11M10.5 7L6.5 11" stroke="#555" stroke-width="1.5"/></svg>
<svg class="i" style="left:833px;top:422.5px" width="12" height="12" viewBox="0 0 12 12"><rect x="0.6" y="1" width="10" height="9.5" fill="#f8f4ea" stroke="#b8860b" stroke-width="0.9"/><rect x="1.8" y="5.5" width="4.5" height="4" fill="#e0a030"/><path d="M2.8 5.5v-1.5a1.2 1.2 0 0 1 2.4 0v1.5" fill="none" stroke="#b8860b" stroke-width="0.8"/><path d="M7.5 3h2.5M7.5 5h2.5M7.5 7h2.5" stroke="#5a7fc0" stroke-width="0.8"/></svg>
<svg class="i" style="left:848.5px;top:422.5px" width="12" height="12" viewBox="0 0 12 12"><rect x="0.6" y="0.8" width="7.5" height="8.5" fill="#f3f3ee" stroke="#b0b0a5" stroke-width="0.8"/><path d="M2 3h4.5M2 5h4.5M2 7h3" stroke="#c5c5ba" stroke-width="0.7"/><path d="M8 3h2.5v5h-4" fill="none" stroke="#e0b040" stroke-width="1.2"/></svg>
<div class="r" style="left:862px;top:420.5px;width:16px;height:14.5px;background:#cce4f9;box-shadow:inset 0 0 0 0.8px #8fc3ee"></div>
<div class="r" style="left:878px;top:420.5px;width:16px;height:14.5px;background:#cce4f9;box-shadow:inset 0 0 0 0.8px #8fc3ee"></div>
<svg class="i" style="left:865px;top:422.5px" width="12" height="11" viewBox="0 0 12 11"><rect x="2.5" y="0.8" width="8.5" height="6" rx="1" fill="#f4f8ff" stroke="#5a7090" stroke-width="0.9"/><path d="M4.3 3.2h5" stroke="#8aa0c0" stroke-width="0.7"/><path d="M0.8 4v5.5h4M3.5 8l1.5 1.5L3.5 11" fill="none" stroke="#34507a" stroke-width="0.9"/></svg>
<svg class="i" style="left:881px;top:422.5px" width="12" height="11" viewBox="0 0 12 11"><rect x="2.5" y="0.8" width="8.5" height="6" rx="1" fill="#f4f8ff" stroke="#5a7090" stroke-width="0.9"/><rect x="5" y="2" width="3.5" height="3" fill="#e0404a"/><path d="M0.8 4v5.5h4M3.5 8l1.5 1.5L3.5 11" fill="none" stroke="#34507a" stroke-width="0.9"/></svg>
<div class="r" style="left:896px;top:421px;width:1px;height:15px;background:#b9b9b9;"></div>
<svg class="i" style="left:902.5px;top:423px" width="11" height="11" viewBox="0 0 11 11"><rect x="0.6" y="3.4" width="8" height="6.6" fill="#eef4fd" stroke="#34507a" stroke-width="0.9"/><rect x="0.6" y="3.4" width="8" height="2" fill="#2f5fa8"/><path d="M5 3.5L8.5 0.8l1.6 1.6L6.8 5z" fill="#2fa050"/></svg>
<svg class="i" style="left:918.5px;top:422.5px" width="11" height="11" viewBox="0 0 11 11"><rect x="0.8" y="0.8" width="9" height="6.6" rx="0.8" fill="#e9f0fc" stroke="#1f3f8a" stroke-width="1.3"/><path d="M3 3h3M3 4.8h4.5" stroke="#5a7fc0" stroke-width="0.7"/><path d="M3 9.8h5" stroke="#1f3f8a" stroke-width="1.4"/></svg>
<svg class="i" style="left:934px;top:426.3px" width="7" height="4.5" viewBox="0 0 7 4.5"><path d="M0 0.3h7L3.5 4.2z" fill="#111"/></svg>
<svg class="i" style="left:947px;top:422px" width="12" height="12" viewBox="0 0 12 12"><rect x="0.6" y="2.6" width="9" height="8.4" fill="#fffbe8" stroke="#8a9ab5" stroke-width="0.9"/><rect x="0.6" y="2.6" width="9" height="2" fill="#4f7fc4"/><path d="M9 0.3l0.8 1.6 1.7 0.3-1.2 1.2 0.3 1.8L9 4.4 7.4 5.2l0.3-1.8L6.5 2.2l1.7-0.3z" fill="#f3c64a" stroke="#c8931c" stroke-width="0.4"/></svg>
<svg class="i" style="left:962.6px;top:426.3px" width="7" height="4.5" viewBox="0 0 7 4.5"><path d="M0 0.3h7L3.5 4.2z" fill="#111"/></svg>
<svg class="i" style="left:976.6px;top:423.5px" width="8" height="4" viewBox="0 0 8 4"><rect x="0.5" y="0.5" width="6.8" height="2.6" rx="0.7" fill="#f4f4f4" stroke="#6e6e6e" stroke-width="0.9"/></svg>
<svg class="i" style="left:992.0px;top:423.4px" width="9" height="9" viewBox="0 0 9 9"><rect x="0.5" y="0.5" width="7.2" height="7" rx="0.9" fill="#fff" stroke="#6e6e6e" stroke-width="0.9"/><path d="M0.5 2.3h7.2" stroke="#6e6e6e" stroke-width="0.9"/></svg>
<div class="r" style="left:544.0px;top:288.6px;width:2.3px;height:427.4px;background:linear-gradient(90deg,#979797,#bcbcbc);border-radius:0 1.5px 0 0;box-shadow:0.6px 0 0.8px rgba(0,0,0,0.12)"></div>
<div class="r" style="left:307.5px;top:284.5px;width:236.5px;height:431.5px;background:#f2f2f2;box-shadow:0 0 0 0.7px #d4d4d4"></div>
<div class="r" style="left:309.2px;top:701px;width:233.8px;height:15px;background:#91c9f7;"></div>
<span class="t" style='left:331.95px;top:288.04px;font-size:10.2px;line-height:13.26px;color:#8c8c8c;transform:scaleX(1.0591);'>Undo</span>
<span class="t" style='left:498.35px;top:288.04px;font-size:10.2px;line-height:13.26px;color:#8c8c8c;transform:scaleX(1.0815);'>Ctrl+Z</span>
<span class="t" style='left:331.95px;top:303.79px;font-size:10.2px;line-height:13.26px;color:#8c8c8c;transform:scaleX(0.9804);'>Revert File</span>
<span class="t" style='left:331.95px;top:319.79px;font-size:10.2px;line-height:13.26px;color:#8c8c8c;transform:scaleX(0.9598);'>Save</span>
<span class="t" style='left:499.35px;top:319.79px;font-size:10.2px;line-height:13.26px;color:#8c8c8c;transform:scaleX(1.0247);'>Ctrl+S</span>
<div class="r" style="left:330px;top:335.0px;width:212px;height:1px;background:#d9d9d9;"></div>
<span class="t" style='left:331.95px;top:340.29px;font-size:10.2px;line-height:13.26px;color:#111;transform:scaleX(1.0221);'>Open Declaration</span>
<span class="t" style='left:517.35px;top:340.29px;font-size:10.2px;line-height:13.26px;color:#111;transform:scaleX(0.9503);'>F3</span>
<span class="t" style='left:331.95px;top:356.64px;font-size:10.2px;line-height:13.26px;color:#111;transform:scaleX(0.9971);'>Open Type Hierarchy</span>
<span class="t" style='left:517.35px;top:356.64px;font-size:10.2px;line-height:13.26px;color:#111;transform:scaleX(0.9503);'>F4</span>
<span class="t" style='left:331.95px;top:373.04px;font-size:10.2px;line-height:13.26px;color:#111;transform:scaleX(0.9980);'>Open Call Hierarchy</span>
<span class="t" style='left:477.60px;top:373.04px;font-size:10.2px;line-height:13.26px;color:#111;transform:scaleX(1.0862);'>Ctrl+Alt+H</span>
<span class="t" style='left:331.95px;top:389.54px;font-size:10.2px;line-height:13.26px;color:#111;transform:scaleX(1.0105);'>Quick Outline</span>
<span class="t" style='left:497.35px;top:389.54px;font-size:10.2px;line-height:13.26px;color:#111;transform:scaleX(1.0532);'>Ctrl+O</span>
<span class="t" style='left:331.95px;top:406.04px;font-size:10.2px;line-height:13.26px;color:#111;transform:scaleX(0.9907);'>Quick Type Hierarchy</span>
<span class="t" style='left:499.85px;top:406.04px;font-size:10.2px;line-height:13.26px;color:#111;transform:scaleX(1.0280);'>Ctrl+T</span>
<span class="t" style='left:331.95px;top:422.54px;font-size:10.2px;line-height:13.26px;color:#111;transform:scaleX(0.9953);'>Explore Macro Expansion</span>
<span class="t" style='left:498.85px;top:422.54px;font-size:10.2px;line-height:13.26px;color:#111;transform:scaleX(1.0849);'>Ctrl+#</span>
<span class="t" style='left:331.95px;top:438.94px;font-size:10.2px;line-height:13.26px;color:#111;transform:scaleX(1.0239);'>Toggle Source/Header</span>
<span class="t" style='left:489.35px;top:438.94px;font-size:10.2px;line-height:13.26px;color:#111;transform:scaleX(1.0283);'>Ctrl+Tab</span>
<span class="t" style='left:331.95px;top:455.34px;font-size:10.2px;line-height:13.26px;color:#111;'>Show In</span>
<span class="t" style='left:470.85px;top:455.34px;font-size:10.2px;line-height:13.26px;color:#111;transform:scaleX(1.0744);'>Alt+Shift+W</span>
<svg class="i" style="left:529.3px;top:457.1px" width="10" height="10" viewBox="-5 -5 10 10"><path d="M-1.3 -2.6L1.3 0L-1.3 2.6" fill="none" stroke="#444" stroke-width="0.9"/></svg>
<div class="r" style="left:330px;top:471.75px;width:212px;height:1px;background:#d9d9d9;"></div>
<span class="t" style='left:331.95px;top:476.14px;font-size:10.2px;line-height:13.26px;color:#111;transform:scaleX(0.9963);'>Cut</span>
<span class="t" style='left:498.85px;top:476.14px;font-size:10.2px;line-height:13.26px;color:#111;transform:scaleX(1.0422);'>Ctrl+X</span>
<span class="t" style='left:331.95px;top:490.94px;font-size:10.2px;line-height:13.26px;color:#111;'>Copy</span>
<span class="t" style='left:498.85px;top:490.94px;font-size:10.2px;line-height:13.26px;color:#111;transform:scaleX(1.0221);'>Ctrl+C</span>
<div class="r" style="left:330px;top:507.0px;width:212px;height:1px;background:#d9d9d9;"></div>
<span class="t" style='left:331.95px;top:511.79px;font-size:10.2px;line-height:13.26px;color:#111;transform:scaleX(0.9846);'>Quick Fix</span>
<span class="t" style='left:499.85px;top:511.79px;font-size:10.2px;line-height:13.26px;color:#111;transform:scaleX(1.0485);'>Ctrl+1</span>
<span class="t" style='left:331.95px;top:528.14px;font-size:10.2px;line-height:13.26px;color:#111;transform:scaleX(0.9851);'>Source</span>
<span class="t" style='left:474.85px;top:528.14px;font-size:10.2px;line-height:13.26px;color:#111;transform:scaleX(1.0555);'>Alt+Shift+S</span>
<svg class="i" style="left:529.3px;top:529.9px" width="10" height="10" viewBox="-5 -5 10 10"><path d="M-1.3 -2.6L1.3 0L-1.3 2.6" fill="none" stroke="#444" stroke-width="0.9"/></svg>
<span class="t" style='left:331.95px;top:544.54px;font-size:10.2px;line-height:13.26px;color:#111;transform:scaleX(1.0104);'>Surround With</span>
<span class="t" style='left:473.85px;top:544.54px;font-size:10.2px;line-height:13.26px;color:#111;transform:scaleX(1.0872);'>Alt+Shift+Z</span>
<svg class="i" style="left:529.3px;top:546.3px" width="10" height="10" viewBox="-5 -5 10 10"><path d="M-1.3 -2.6L1.3 0L-1.3 2.6" fill="none" stroke="#444" stroke-width="0.9"/></svg>
<span class="t" style='left:331.95px;top:561.04px;font-size:10.2px;line-height:13.26px;color:#111;transform:scaleX(1.0204);'>Refactor</span>
<svg class="i" style="left:529.3px;top:562.8px" width="10" height="10" viewBox="-5 -5 10 10"><path d="M-1.3 -2.6L1.3 0L-1.3 2.6" fill="none" stroke="#444" stroke-width="0.9"/></svg>
<div class="r" style="left:330px;top:577.25px;width:212px;height:1px;background:#d9d9d9;"></div>
<span class="t" style='left:331.95px;top:582.34px;font-size:10.2px;line-height:13.26px;color:#111;transform:scaleX(1.0208);'>Declarations</span>
<svg class="i" style="left:529.3px;top:584.0999999999999px" width="10" height="10" viewBox="-5 -5 10 10"><path d="M-1.3 -2.6L1.3 0L-1.3 2.6" fill="none" stroke="#444" stroke-width="0.9"/></svg>
<span class="t" style='left:331.95px;top:598.84px;font-size:10.2px;line-height:13.26px;color:#111;transform:scaleX(0.9653);'>References</span>
<svg class="i" style="left:529.3px;top:600.5999999999999px" width="10" height="10" viewBox="-5 -5 10 10"><path d="M-1.3 -2.6L1.3 0L-1.3 2.6" fill="none" stroke="#444" stroke-width="0.9"/></svg>
<span class="t" style='left:331.95px;top:615.34px;font-size:10.2px;line-height:13.26px;color:#111;transform:scaleX(0.9756);'>Search Text</span>
<svg class="i" style="left:529.3px;top:617.0999999999999px" width="10" height="10" viewBox="-5 -5 10 10"><path d="M-1.3 -2.6L1.3 0L-1.3 2.6" fill="none" stroke="#444" stroke-width="0.9"/></svg>
<div class="r" style="left:330px;top:631.25px;width:212px;height:1px;background:#d9d9d9;"></div>
<span class="t" style='left:331.95px;top:636.54px;font-size:10.2px;line-height:13.26px;color:#111;transform:scaleX(1.0148);'>Step Into Selection</span>
<span class="t" style='left:494.35px;top:636.54px;font-size:10.2px;line-height:13.26px;color:#111;transform:scaleX(1.0182);'>Ctrl+F5</span>
<div class="r" style="left:330px;top:652.75px;width:212px;height:1px;background:#d9d9d9;"></div>
<span class="t" style='left:331.95px;top:656.94px;font-size:10.2px;line-height:13.26px;color:#111;transform:scaleX(0.9941);'>Run to Line</span>
<span class="t" style='left:498.35px;top:656.94px;font-size:10.2px;line-height:13.26px;color:#111;transform:scaleX(1.0392);'>Ctrl+R</span>
<span class="t" style='left:331.95px;top:671.94px;font-size:10.2px;line-height:13.26px;color:#111;transform:scaleX(1.0250);'>Move to Line</span>
<span class="t" style='left:331.95px;top:687.04px;font-size:10.2px;line-height:13.26px;color:#111;transform:scaleX(0.9781);'>Resume at Line</span>
<span class="t" style='left:331.95px;top:702.14px;font-size:10.2px;line-height:13.26px;color:#111;transform:scaleX(0.9697);'>Add Watch Expression...</span>
<svg class="i" style="left:313px;top:288.8px" width="11.5" height="10.5" viewBox="0 0 11.5 10.5"><path d="M4.6 3.2L0.8 6l4.4 3.6-0.3-2.2c3.2 0.6 5.6-2.4 4.6-6.4-0.8 2.2-2.6 3-4.6 2.6z" fill="#ececec" stroke="#bcbcbc" stroke-width="0.8" stroke-linejoin="round"/></svg>
<svg class="i" style="left:313px;top:321px" width="11" height="11" viewBox="0 0 11 11"><path d="M0.7 0.7h8l1.6 1.6v8h-9.6z" fill="#f4f4f4" stroke="#c2c2c2" stroke-width="0.9"/><rect x="2.6" y="0.9" width="5" height="3.2" fill="#fff" stroke="#cacaca" stroke-width="0.6"/><rect x="2.4" y="6" width="6" height="4.2" fill="#e6e6e6" stroke="#cacaca" stroke-width="0.6"/></svg>
<svg class="i" style="left:312.8px;top:477px" width="11" height="11" viewBox="0 0 11 11"><path d="M4.2 5.2L9.6 2.4M5.2 6L7.6 0.6" stroke="#5f6f8e" stroke-width="1.1" stroke-linecap="round" fill="none"/><circle cx="2.3" cy="5.6" r="1.7" fill="#eaf2fc" stroke="#5a8fd2" stroke-width="1"/><circle cx="5.4" cy="8.6" r="1.7" fill="#eaf2fc" stroke="#5a8fd2" stroke-width="1"/></svg>
<svg class="i" style="left:313px;top:492px" width="10.5" height="11" viewBox="0 0 10.5 11"><path d="M0.6 0.6h5.6v8.2h-5.6z" fill="#eee6d6" stroke="#c2b294" stroke-width="0.8"/><path d="M2.8 2.2h4.6l2.2 2.2v6h-6.8z" fill="#e2edf8" stroke="#a8a08a" stroke-width="0.8"/><path d="M7.4 2.2l2.2 2.2h-2.2z" fill="#f0d060"/><path d="M4 5.2h3M4 6.6h4.2M4 8h4.2" stroke="#8fb0d4" stroke-width="0.8"/></svg>
<svg class="i" style="left:312.5px;top:657.8px" width="12" height="11" viewBox="0 0 12 11"><path d="M0.6 4.8h4.6" stroke="#d9aa34" stroke-width="1.5"/><path d="M4.6 2.4l3 2.4-3 2.4z" fill="#e6bd50" stroke="#cf9c26" stroke-width="0.4"/><path d="M7.8 0.8h3.4M9.5 0.8v9M7.8 9.8h3.4" stroke="#a9b9d9" stroke-width="0.9" fill="none"/></svg>
<svg class="i" style="left:312.5px;top:673.2px" width="12" height="10" viewBox="0 0 12 10"><path d="M1.4 2.2h4.6v3.6" stroke="#d9aa34" stroke-width="1.6" fill="none"/><path d="M3.6 5.2h4.8L6 8.2z" fill="#e6bd50" stroke="#cf9c26" stroke-width="0.4"/><path d="M0.6 8.8h2.6M8.6 8.8h2.6" stroke="#1f2a50" stroke-width="1"/></svg>
<svg class="i" style="left:312.5px;top:688.3px" width="12" height="10" viewBox="0 0 12 10"><path d="M1.4 2.2h4.6v3.6" stroke="#d9aa34" stroke-width="1.6" fill="none"/><path d="M4 5.6l3 0.4" stroke="#d9aa34" stroke-width="1.6"/><path d="M7 4.2l3 3-3.6 1.6z" fill="#e6bd50" stroke="#cf9c26" stroke-width="0.4"/><path d="M0.6 8.8h2.6M9 8.8h2" stroke="#1f2a50" stroke-width="1"/></svg>
<svg class="i" style="left:313px;top:703px" width="11" height="11" viewBox="0 0 11 11"><text x="0" y="5.2" font-size="6" fill="#5c7096" font-family="Liberation Sans,sans-serif" textLength="10.6" lengthAdjust="spacingAndGlyphs">X+Y</text><text x="0.8" y="10" font-size="5.6" fill="#6f86ae" font-family="Liberation Sans,sans-serif">=?</text></svg>
<svg class="i" style="left:150.8px;top:334.9px;overflow:hidden" width="159.7" height="19.400000000000034" viewBox="0 0 159.7 19.400000000000034"><rect x="3.05" y="3.05" width="153.6" height="13.300000000000034" fill="none" stroke="#e61e28" stroke-width="2.1"/></svg>
<svg class="i" style="left:666.4px;top:125.3px;overflow:hidden" width="331.30000000000007" height="22.799999999999997" viewBox="0 0 331.30000000000007 22.799999999999997"><rect x="3.05" y="3.05" width="325.20000000000005" height="16.699999999999996" fill="none" stroke="#e61e28" stroke-width="2.1"/></svg>
<svg class="i" style="left:302.0px;top:697.1px;overflow:hidden" width="246.20000000000005" height="18.9" viewBox="0 0 246.20000000000005 18.9"><rect x="3.05" y="3.05" width="240.10000000000005" height="28.799999999999976" fill="none" stroke="#e61e28" stroke-width="2.1"/></svg>
<div class="r" style="left:0px;top:716px;width:1057px;height:160px;background:#fff;"></div>
<div class="r" style="left:475.2px;top:745px;width:48.3px;height:19.4px;background:#ffff30;"></div>
<span class="t" style='left:290.00px;top:742.06px;font-size:20.5px;line-height:26.65px;color:#000;font-family:"Liberation Serif", serif;transform:scaleX(0.9961);'>Fig. 20: Disabling the debug loop in S32 Design Studio</span>
<span class="t" style='left:25.00px;top:808.96px;font-size:20.5px;line-height:26.65px;color:#000;font-family:"Liberation Serif", serif;transform:scaleX(1.0055);'>Alternatively, just set the program counter to the next immediate instruction.</span>
</body></html>
